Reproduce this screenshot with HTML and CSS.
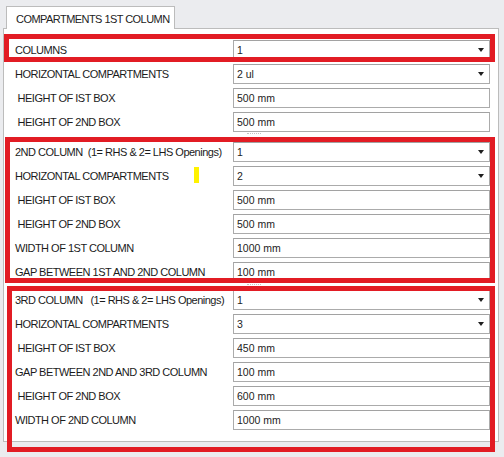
FILE: index.html
```html
<!DOCTYPE html>
<html lang="en">
<head>
    <meta charset="UTF-8">
    <meta name="viewport" content="width=device-width, initial-scale=1.0">
    <title>Compartments</title>
    <link rel="stylesheet" href="styles.css">
</head>
<body>
    <div class="screen">
        <div class="tabs">
            <div class="tab">COMPARTMENTS 1ST COLUMN</div>
        </div>

        <div class="panel">
            <!-- 1st column -->
            <div class="group first">
                <div class="row">
                    <span class="label">COLUMNS</span>
                    <div class="field"><span>1</span><i class="caret"></i></div>
                </div>
                <div class="row">
                    <span class="label">HORIZONTAL COMPARTMENTS</span>
                    <div class="field"><span>2 ul</span><i class="caret"></i></div>
                </div>
                <div class="row">
                    <span class="label">&nbsp;HEIGHT OF IST BOX</span>
                    <div class="field"><span>500 mm</span></div>
                </div>
                <div class="row">
                    <span class="label">&nbsp;HEIGHT OF 2ND BOX</span>
                    <div class="field"><span>500 mm</span></div>
                </div>
            </div>

            <!-- 2nd column -->
            <div class="group second">
                <div class="row">
                    <span class="label">2ND COLUMN&nbsp; (1= RHS &amp; 2= LHS Openings)</span>
                    <div class="field"><span>1</span><i class="caret"></i></div>
                </div>
                <div class="row">
                    <span class="label">HORIZONTAL COMPARTMENTS</span>
                    <div class="field"><span>2</span><i class="caret"></i></div>
                </div>
                <div class="row">
                    <span class="label">&nbsp;HEIGHT OF IST BOX</span>
                    <div class="field"><span>500 mm</span></div>
                </div>
                <div class="row">
                    <span class="label">&nbsp;HEIGHT OF 2ND BOX</span>
                    <div class="field"><span>500 mm</span></div>
                </div>
                <div class="row">
                    <span class="label">WIDTH OF 1ST COLUMN</span>
                    <div class="field"><span>1000 mm</span></div>
                </div>
                <div class="row">
                    <span class="label">GAP BETWEEN 1ST AND 2ND COLUMN</span>
                    <div class="field"><span>100 mm</span></div>
                </div>
            </div>

            <!-- 3rd column -->
            <div class="group third">
                <div class="row">
                    <span class="label">3RD COLUMN&nbsp;&nbsp; (1= RHS &amp; 2= LHS Openings)</span>
                    <div class="field"><span>1</span><i class="caret"></i></div>
                </div>
                <div class="row">
                    <span class="label">HORIZONTAL COMPARTMENTS</span>
                    <div class="field"><span>3</span><i class="caret"></i></div>
                </div>
                <div class="row">
                    <span class="label">&nbsp;HEIGHT OF IST BOX</span>
                    <div class="field"><span>450 mm</span></div>
                </div>
                <div class="row">
                    <span class="label">GAP BETWEEN 2ND AND 3RD COLUMN</span>
                    <div class="field"><span>100 mm</span></div>
                </div>
                <div class="row">
                    <span class="label">&nbsp;HEIGHT OF 2ND BOX</span>
                    <div class="field"><span>600 mm</span></div>
                </div>
                <div class="row">
                    <span class="label">WIDTH OF 2ND COLUMN</span>
                    <div class="field"><span>1000 mm</span></div>
                </div>
            </div>
        </div>

        <!-- splitter grips -->
        <span class="grip grip-1"></span>
        <span class="grip grip-2"></span>

        <!-- red markup frames -->
        <div class="mark mark-1"></div>
        <div class="mark mark-2"></div>
        <div class="mark mark-3"></div>
        <div class="highlight"></div>
    </div>
</body>
</html>
```

FILE: styles.css
```css
body {
    margin: 0;
    background: #ebecef;
    font-family: "Liberation Sans", Arial, sans-serif;
    color: #1b1b1b;
}
.screen {
    position: relative;
    width: 504px;
    height: 457px;
    overflow: hidden;
}
.tabs {
    padding: 6px 0 0 6px;
}
.tab {
    position: relative;
    z-index: 1;
    box-sizing: border-box;
    width: 169px;
    height: 23px;
    margin-bottom: -1px;
    padding: 1px 0 0 9px;
    display: flex;
    align-items: center;
    background: white;
    border: 1px solid #bcbcbc;
    border-bottom: none;
    font-size: 11px;
    letter-spacing: -0.55px;
    color: #222;
}
.panel {
    box-sizing: border-box;
    width: 496px;
    margin-left: 3px;
    padding: 11px 8px 11px 11px;
    background: white;
    border: 1px solid #bcbcbc;
}
.group {
    display: flex;
    flex-direction: column;
    gap: 4px;
}
.group.first {
    margin-bottom: 10px;
}
.group.second {
    margin-bottom: 8px;
}
.row {
    display: grid;
    grid-template-columns: 218px 1fr;
    align-items: center;
    height: 20px;
}
.label {
    font-size: 11px;
    letter-spacing: -0.5px;
    white-space: nowrap;
}
.field {
    box-sizing: border-box;
    height: 20px;
    padding: 0 5px 0 3px;
    display: flex;
    align-items: center;
    border: 1px solid #ababab;
    border-top-color: #a2a2a2;
    background: white;
    font-size: 10.5px;
    color: #222;
}
.caret {
    margin-left: auto;
    width: 0;
    height: 0;
    border-top: 4px solid #1e1e1e;
    border-left: 3.5px solid transparent;
    border-right: 3.5px solid transparent;
}
.grip {
    position: absolute;
    left: 247px;
    width: 14px;
    border-top: 1px dotted #c4c4c4;
}
.grip-1 {
    top: 133px;
}
.grip-2 {
    top: 284px;
}
.mark {
    position: absolute;
    box-sizing: border-box;
    border: 5px solid #e21c24;
}
.mark-1 {
    left: 4px;
    top: 34px;
    width: 491px;
    height: 28px;
}
.mark-2 {
    left: 5px;
    top: 137px;
    width: 490px;
    height: 146px;
}
.mark-3 {
    left: 7px;
    top: 286px;
    width: 488px;
    height: 166px;
}
.highlight {
    position: absolute;
    left: 194px;
    top: 167px;
    width: 5px;
    height: 16px;
    background: #fff200;
}
```
